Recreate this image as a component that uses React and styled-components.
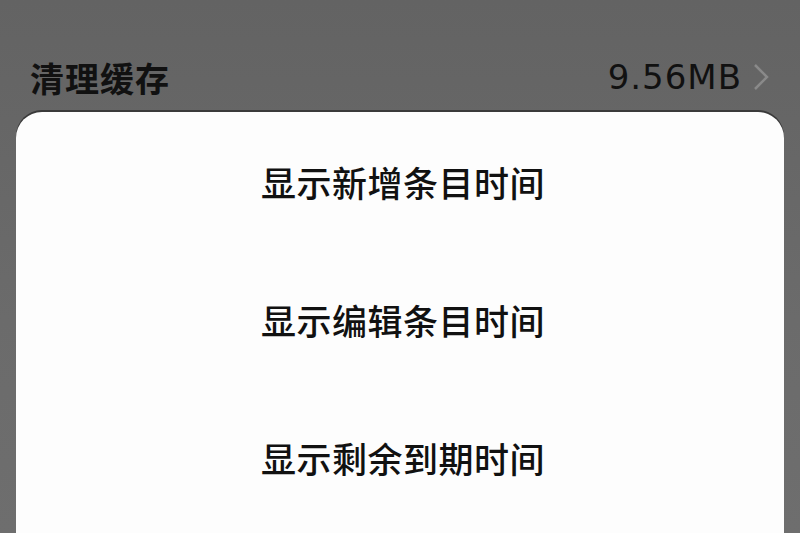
import React from "react";
import styled, { createGlobalStyle } from "styled-components";

const GlobalStyle = createGlobalStyle`
  html, body {
    margin: 0;
    padding: 0;
    background: #6b6b6b;
    overflow: hidden;
  }
  body {
    font-family: "Noto Sans CJK SC", "Noto Sans", sans-serif;
  }
`;

const Screen = styled.div`
  width: 800px;
  height: 533px;
  background: linear-gradient(180deg, #636363 0%, #6b6b6b 60%, #6e6e6e 100%);
  display: flex;
  flex-direction: column;
  overflow: hidden;
`;

const SettingRow = styled.div`
  height: 112px;
  padding: 42px 30px 0 30px;
  box-sizing: border-box;
  display: flex;
  align-items: center;
  justify-content: space-between;
  color: #111;
`;

const RowLabel = styled.span`
  font-size: 34px;
  font-weight: 600;
  letter-spacing: 1px;
`;

const RowValue = styled.div`
  display: flex;
  align-items: center;
  gap: 10px;
  font-family: "DejaVu Sans", sans-serif;
  font-size: 34px;
  letter-spacing: 1px;
`;

const Sheet = styled.div`
  flex: 1;
  margin: 0 16px;
  background: #fdfdfd;
  border-radius: 26px 26px 0 0;
  box-shadow: 0 -2px 0 #3a3a3a;
  display: flex;
  flex-direction: column;
`;

const Option = styled.div`
  height: 138px;
  flex-shrink: 0;
  display: flex;
  align-items: center;
  justify-content: center;
  padding-left: 6px;
  font-size: 35px;
  font-weight: 500;
  color: #111;
  letter-spacing: 0.5px;
`;

const options = ["显示新增条目时间", "显示编辑条目时间", "显示剩余到期时间"];

export default function App() {
  return (
    <>
      <GlobalStyle />
      <Screen>
        <SettingRow>
          <RowLabel>清理缓存</RowLabel>
          <RowValue>
            9.56MB
            <svg width="18" height="30" viewBox="0 0 18 30">
              <path d="M3 3 L15 15 L3 27" fill="none" stroke="#8a8a8a" strokeWidth="2.5" />
            </svg>
          </RowValue>
        </SettingRow>
        <Sheet>
          {options.map((o) => (
            <Option key={o}>{o}</Option>
          ))}
        </Sheet>
      </Screen>
    </>
  );
}
